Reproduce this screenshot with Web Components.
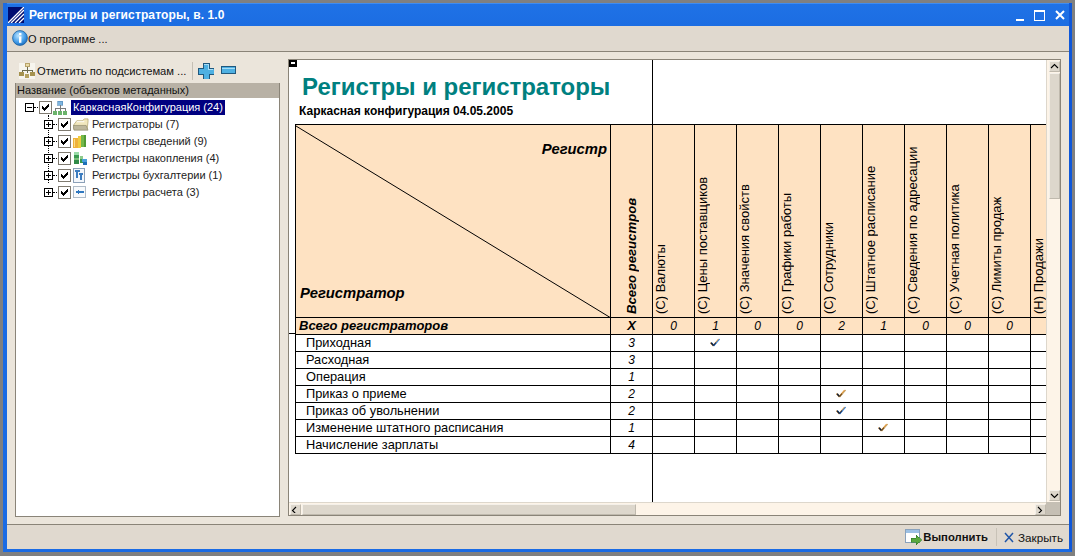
<!DOCTYPE html>
<html><head><meta charset="utf-8">
<style>
html,body{margin:0;padding:0;width:1075px;height:556px;overflow:hidden;background:#808080;font-family:"Liberation Sans",Arial,sans-serif;}
</style></head><body>
<app-window>
  <title-bar slot="title">Регистры и регистраторы, в. 1.0</title-bar>
  <menu-bar slot="menu">О программе ...</menu-bar>
  <tree-panel slot="left"></tree-panel>
  <sheet-view slot="right"></sheet-view>
  <status-bar slot="status"></status-bar>
</app-window>
<script>
function def(name, html, init){
  customElements.define(name, class extends HTMLElement{
    constructor(){super();this.attachShadow({mode:'open'}).innerHTML=typeof html==='function'?html(this):html;}
    connectedCallback(){ if(init) init(this); }
  });
}
const infoIcon=`<svg width="16" height="16" viewBox="0 0 16 16"><defs><radialGradient id="i" cx=".4" cy=".35" r=".75"><stop offset="0" stop-color="#bfe6ff"/><stop offset=".6" stop-color="#3f9ae8"/><stop offset="1" stop-color="#1660b0"/></radialGradient></defs><circle cx="8" cy="8" r="7.4" fill="url(#i)" stroke="#1c5f9e" stroke-width=".8"/><rect x="7" y="3" width="2.4" height="2.2" fill="#fff"/><rect x="7" y="6.4" width="2.4" height="6.4" fill="#fff"/></svg>`;
const hierIcon=`<svg width="16" height="16" viewBox="0 0 16 16" shape-rendering="crispEdges"><rect width="16" height="16" fill="#f7f5ee"/><rect x="6" y="0" width="5" height="4" fill="#b9a36a"/><rect x="7" y="1" width="3" height="2" fill="#e9dca8"/><path d="M8 4v3M3 7h11M3 7v3M8 7v3M13 7v3" stroke="#6c6c50" fill="none"/><rect x="0" y="9" width="5" height="4" fill="#a5924f"/><rect x="6" y="11" width="4" height="4" fill="#b6a260"/><rect x="11" y="9" width="5" height="4" fill="#a5924f"/></svg>`;
const netIcon=`<svg width="14" height="16" viewBox="0 0 14 16" shape-rendering="crispEdges"><rect x="4.5" y="1" width="5" height="4" fill="#7fb6e0" stroke="#4f87b5" stroke-width=".6"/><path d="M7 5v3M2 8h10M2 8v3M7 8v3M12 8v3" stroke="#7a7a7a" fill="none"/><rect x="0" y="11" width="4" height="4" fill="#6bb36b"/><rect x="5" y="11" width="4" height="4" fill="#6bb36b"/><rect x="10" y="11" width="4" height="4" fill="#6bb36b"/></svg>`;
const treeIcons={
 folder:`<svg width="16" height="15" viewBox="0 0 17 16"><path d="M1 8 4 4h6l2-2h4v3L15 13H1z" fill="#f1e7bd" stroke="#b3a672" stroke-width=".8"/><path d="M0 9h14l2 5H1z" fill="#bdb79c" stroke="#8d8868" stroke-width=".7"/><path d="M4 5h8" stroke="#fff" /></svg>`,
 books:`<svg width="13" height="15" viewBox="0 0 14 16" shape-rendering="crispEdges"><rect x="0" y="4" width="5" height="11" fill="#efb23a"/><rect x="1" y="5" width="1" height="9" fill="#f9dd8a"/><rect x="5" y="2" width="4" height="13" fill="#f0cc40"/><rect x="9" y="1" width="5" height="13" fill="#74b84a"/><rect x="12" y="1" width="2" height="13" fill="#4f9a35"/></svg>`,
 stock:`<svg width="15" height="15" viewBox="0 0 16 16" shape-rendering="crispEdges"><rect x="1" y="1" width="5" height="3" fill="#9adca8"/><rect x="1" y="4" width="5" height="3" fill="#3a9a50"/><rect x="1" y="7" width="5" height="3" fill="#7cc07c"/><rect x="1" y="10" width="5" height="4" fill="#2f8a48"/><rect x="7" y="5" width="4" height="3" fill="#8ecb8e"/><rect x="7" y="8" width="4" height="5" fill="#3a9a50"/><rect x="10" y="9" width="5" height="3" fill="#4aa0dc"/><rect x="11" y="12" width="4" height="3" fill="#1e6fb8"/></svg>`,
 acc:`<svg width="12" height="15" viewBox="0 0 12 15" shape-rendering="crispEdges"><rect x=".5" y=".5" width="11" height="14" fill="#f4f7fb" stroke="#8ba0b8"/><path d="M2 3h5M4 3v7M6 6h4M8 6v6" stroke="#3b7cc0" stroke-width="1.2" fill="none"/></svg>`,
 calc:`<svg width="13" height="13" viewBox="0 0 13 13" shape-rendering="crispEdges"><rect x=".5" y=".5" width="12" height="11" fill="#f8fafc" stroke="#b0bcc8"/><path d="M3 6h8" stroke="#2f78c0" stroke-width="2"/><path d="M5 4v4M6 5v2" stroke="#2f78c0"/></svg>`
};
const check=`<svg width="9" height="9" viewBox="0 0 9 9" shape-rendering="crispEdges"><path d="M1 3h1v3h-1zM2 4h1v3h-1zM3 5h1v3h-1zM4 4h1v3h-1zM5 3h1v3h-1zM6 2h1v3h-1zM7 1h1v3h-1z" fill="#000"/></svg>`;

def('app-window',`<style>
:host{display:block;width:1075px;height:556px;box-sizing:border-box;padding:3px 3px 4px 3px;background:#808080}
.f{height:549px;box-sizing:border-box;border:solid #1a6be4;border-width:0 3px 3px 4px;background:#ebe5db;display:flex;flex-direction:column;border-right-color:#1058d8}
.t{height:23px;flex:none}
.m{height:26px;flex:none}
.c{flex:1;min-height:0;display:flex;gap:8px;padding:7px 8px 7px 8px;box-sizing:border-box}
.s{height:25px;flex:none}
</style><div class="f"><div class="t"><slot name="title"></slot></div><div class="m"><slot name="menu"></slot></div><div class="c"><slot name="left"></slot><slot name="right"></slot></div><div class="s"><slot name="status"></slot></div></div>`);

def('title-bar',`<style>
:host{display:flex;align-items:center;height:23px;background:linear-gradient(#1f72e6,#1c6de2);border-top:1px solid #3f8cf0;box-sizing:border-box;color:#fff;font:bold 12px "Liberation Sans",sans-serif;padding-left:1px}
.logo{margin-right:5px;display:block;margin-left:0}
.txt{flex:1;letter-spacing:.12px}
.b{display:flex;align-items:center;gap:10px;margin-right:4px}
svg{display:block}
</style>
<svg class="logo" width="16" height="16" viewBox="0 0 16 16" shape-rendering="crispEdges"><rect width="16" height="16" fill="#000c70"/><path d="M0 16 16 0M3 16 16 3M7 16 16 7M11 16 16 11" stroke="#fff" stroke-width="1.3" shape-rendering="auto"/></svg>
<span class="txt"><slot></slot></span>
<span class="b">
<svg width="8" height="11" viewBox="0 0 8 11" shape-rendering="crispEdges"><rect y="9" width="8" height="2" fill="#fff"/></svg>
<svg width="11" height="11" viewBox="0 0 11 11" shape-rendering="crispEdges"><path d="M.5.5h10v10H.5z" fill="none" stroke="#fff"/><rect width="11" height="1.5" fill="#fff"/></svg>
<svg width="10" height="10" viewBox="0 0 10 10"><path d="M1 1l8 8M9 1l-8 8" stroke="#fff" stroke-width="2"/></svg>
</span>`);

def('menu-bar',`<style>
:host{display:flex;align-items:center;height:26px;box-sizing:border-box;background:#e0d9cf;border-bottom:1px solid #8a8478;padding:0 0 1px 5px;font:11px "Liberation Sans",sans-serif;color:#111;gap:0}
svg{display:block}
span{position:relative;top:1px}
</style>${infoIcon}<span><slot></slot></span>`);

def('tool-bar',`<style>
:host{display:flex;align-items:center;height:23px;padding-left:4px;font:11.2px "Liberation Sans",sans-serif;color:#111}
svg{display:block}
.sep{width:1px;height:18px;background:#c5bfb4;margin:0 5px 0 6px}
.t{margin-left:2px;white-space:nowrap}
.gap{margin-left:7px}
</style>${hierIcon}<span class="t"><slot></slot></span><span class="sep"></span>
<svg width="16" height="17" viewBox="0 0 16 17" shape-rendering="crispEdges"><path d="M5 1h6v5h5v6h-5v5H5v-5H0V6h5z" fill="#4eb0e2" stroke="#20587e"/><path d="M6 2h4v5h5" stroke="#a6dcf6" fill="none"/></svg>
<svg class="gap" width="15" height="9" viewBox="0 0 15 9" shape-rendering="crispEdges"><rect x=".5" y=".5" width="14" height="7" fill="#4eb0e2" stroke="#20587e"/><path d="M1 2h13" stroke="#a6dcf6"/></svg>`);

def('tree-node',(h)=>{
 const icon=h.getAttribute('icon'), root=h.hasAttribute('root'), sel=h.hasAttribute('selected');
 return `<style>
:host{display:flex;align-items:center;height:17px;font:11px "Liberation Sans",sans-serif;color:#222;position:relative}
svg{display:block}
.ind{flex:none;width:${root?9:28}px;display:flex;justify-content:flex-end}
.pm{flex:none;width:9px;height:9px;box-sizing:border-box;border:1px solid #000;background:#fff;position:relative}
.pm:before{content:"";position:absolute;left:1px;right:1px;top:3px;height:1px;background:#000}
.pm.p:after{content:"";position:absolute;top:1px;bottom:1px;left:3px;width:1px;background:#000}
.dots{flex:none;width:4px;border-top:1px dotted #000;margin:0 1px 0 0}
.cb{flex:none;width:13px;height:13px;box-sizing:border-box;border:1px solid #7f7a70;background:#fff;display:flex;align-items:center;justify-content:center;margin-right:${root?1:2}px}
.ic{flex:none;width:${root?18:16}px;display:flex;align-items:center}
.l{white-space:nowrap;padding:0 2px;line-height:15px;height:15px;margin-left:${root?0:1}px}
.sel{background:#000080;color:#fff;outline:0}
</style>
<span class="ind"></span><span class="pm ${root?'':'p'}"></span><span class="dots"></span><span class="cb">${check}</span><span class="ic">${root?netIcon:treeIcons[icon]}</span><span class="l ${sel?'sel':''}"><slot></slot></span>`;
});

def('tree-panel',`<style>
:host{display:flex;flex-direction:column;width:265px;flex:none}
.tb{height:24px;flex:none}
.box{flex:1;display:flex;flex-direction:column;border:1px solid #8a8478;border-top:none;background:#fff;box-sizing:border-box;position:relative}
.head{height:15px;margin:0 -1px;background:#b8b1a5;font:11px "Liberation Sans",sans-serif;color:#111;padding:0 1px;line-height:15px;box-sizing:border-box;border-left:1px solid #8a8478;border-right:1px solid #8a8478}
.nodes{padding-top:1px;position:relative}
.vl{position:absolute;left:32px;top:17px;height:68px;border-left:1px dotted #000}
</style>
<div class="tb"><tool-bar>Отметить по подсистемам ...</tool-bar></div>
<div class="box"><div class="head">Название (объектов метаданных)</div>
<div class="nodes"><span class="vl"></span>
<tree-node root selected>КаркаснаяКонфигурация (24)</tree-node>
<tree-node icon="folder">Регистраторы (7)</tree-node>
<tree-node icon="books">Регистры сведений (9)</tree-node>
<tree-node icon="stock">Регистры накопления (4)</tree-node>
<tree-node icon="acc">Регистры бухгалтерии (1)</tree-node>
<tree-node icon="calc">Регистры расчета (3)</tree-node>
</div></div>`);

const arrows={up:'M1 5 4.5 1.5 8 5',down:'M1 2 4.5 5.5 8 2',left:'M5 1 1.5 4.5 5 8',right:'M2 1 5.5 4.5 2 8'};
def('scroll-btn',(h)=>`<style>:host{display:flex;flex:none;width:9px;height:9px;align-items:center;justify-content:center;background:#ddd7cc;border:1px solid;border-color:#f4f0e9 #bfb9ad #bfb9ad #f4f0e9}svg{display:block}</style><svg width="9" height="7" viewBox="0 0 9 7" fill="none" stroke="#000" stroke-width="1.1"><path d="${arrows[h.getAttribute('dir')]}"/></svg>`);

def('sheet-table',(h)=>{
 const cols=['(С) Валюты','(С) Цены поставщиков','(С) Значения свойств','(С) Графики работы','(С) Сотрудники','(С) Штатное расписание','(С) Сведения по адресации','(С) Учетная политика','(С) Лимиты продаж','(Н) Продажи'];
 const tot=['0','1','0','0','2','1','0','0','0',''];
 const rows=[['Приходная','3',{1:'b'}],['Расходная','3',{}],['Операция','1',{}],['Приказ о приеме','2',{4:'o'}],['Приказ об увольнении','2',{4:'b'}],['Изменение штатного расписания','1',{5:'o'}],['Начисление зарплаты','4',{}]];
 const mark=c=>`<svg width="10" height="9" viewBox="0 0 10 9" fill="none" stroke-width="1.1"><path d="M.4 4.6 3 7.6 8.6 1" stroke="#e8922a"/><path d="M1.4 4.6 4 7.6 9.6 1" stroke="${c=='b'?'#3a84d8':'#c9a060'}"/><path d="M1 4.8 3.5 7.6" stroke="#10203a" stroke-width="1.5"/><path d="M3.5 7.6 6 4.7" stroke="${c=='b'?'#16305c':'#6a4a20'}" stroke-width="1.1"/></svg>`;
 return `<style>
:host{display:block;position:relative;font:12.8px "Liberation Sans",sans-serif;color:#000}
table{border-collapse:collapse;table-layout:fixed;width:777px}
td,th{border:1px solid #000;padding:0;font-weight:normal;overflow:hidden}
.hd td,.hd th,.tot td{background:#fee2c2}
.hd{height:193px}
.hd th{vertical-align:bottom;text-align:start}
.v{writing-mode:vertical-rl;transform:rotate(180deg);white-space:nowrap;height:192px;width:41px;line-height:15px;padding-top:3px;box-sizing:border-box;text-align:start;font-size:13px}
.vb{font-weight:bold;font-style:italic;line-height:41px;font-size:13.2px}
.r{height:17px;line-height:16px}
.tot td{text-align:center;font-style:italic;font-size:12px}
.tot td:first-child{text-align:left;font-weight:bold;padding-left:3px;font-size:13px}
.nm{padding-left:10px;white-space:nowrap}
.n{text-align:center;font-style:italic;font-size:12px}
.c{text-align:center;vertical-align:top}.c svg{display:block;margin:3px auto 0;position:relative;left:-1px}
.reg{position:absolute;font:bold italic 14.8px "Liberation Sans",sans-serif}
.dg{position:absolute;left:0;top:0;display:block}
</style>
<table><colgroup><col style="width:315px"><col style="width:42px">${cols.map(()=>'<col style="width:42px">').join('')}</colgroup>
<tr class="hd"><td style="position:relative"><svg class="dg" width="315" height="193"><line x1="0" y1="1" x2="315" y2="193" stroke="#000"/></svg><span class="reg" style="right:3px;top:16px">Регистр</span><span class="reg" style="left:4px;bottom:16px">Регистратор</span></td>
<th><div class="v vb">Всего регистров</div></th>${cols.map(c=>`<th><div class="v">${c}</div></th>`).join('')}</tr>
<tr class="tot r"><td>Всего регистраторов</td><td style="font-weight:bold;font-size:13px">X</td>${tot.map(t=>`<td>${t}</td>`).join('')}</tr>
${rows.map(r=>`<tr class="r"><td class="nm">${r[0]}</td><td class="n">${r[1]}</td>${tot.map((_,i)=>`<td class="c">${r[2][i]?mark(r[2][i]):''}</td>`).join('')}</tr>`).join('')}
</table>`;
});

def('sheet-view',`<style>
:host{display:grid;grid-template-columns:1fr 14px;grid-template-rows:1fr 13px;width:773px;flex:none;height:457px;box-sizing:border-box;border:1px solid #8a8478;background:#fff;overflow:hidden}
.view{position:relative;overflow:hidden;background:#fff;padding:0 0 0 6px;min-width:0;min-height:0}
.top{height:64px;box-sizing:border-box}
.tt{padding:12px 0 0 7px;box-sizing:border-box}
h1{margin:0;font:bold 24px/30px "Liberation Sans",sans-serif;color:#008080;letter-spacing:-.03px;white-space:nowrap}
.sub{font:bold 12px/15px "Liberation Sans",sans-serif;color:#000;margin:2px 0 0 -3px;white-space:nowrap}
.vline{position:absolute;left:363px;top:0;bottom:0;width:1px;background:#000}
.hline{position:absolute;left:0;top:273px;width:7px;height:1px;background:#000}
.mk{position:absolute;left:0;top:0;width:8px;height:7px;background:#000}
.mk:after{content:"";position:absolute;left:2px;top:2px;width:4px;height:2px;background:#fff}
.vs{display:flex;flex-direction:column;background:#fdf4e8;border-left:1px solid #ddd7cc;box-sizing:border-box;align-items:center;padding:1px 0 1px 1px}
.thumb{width:9px;height:124px;background:#ddd7cc;border:1px solid;border-color:#f4f0e9 #bfb9ad #bfb9ad #f4f0e9;margin-top:1px}
.sp{flex:1}
.hs{display:flex;background:#fdf4e8;border-top:1px solid #ddd7cc;align-items:center;padding:0 0 0 1px;box-sizing:border-box}
.hthumb{width:332px;height:9px;background:#ddd7cc;border:1px solid;border-color:#f4f0e9 #bfb9ad #bfb9ad #f4f0e9;margin-left:1px}
.corner{background:#c5bfb4}
</style>
<div class="view"><div class="top"><div class="tt"><h1>Регистры и регистраторы</h1><div class="sub">Каркасная конфигурация 04.05.2005</div></div></div>
<sheet-table></sheet-table><span class="vline"></span><span class="hline"></span><span class="mk"></span></div>
<div class="vs"><scroll-btn dir="up"></scroll-btn><div class="thumb"></div><div class="sp"></div><scroll-btn dir="down"></scroll-btn></div>
<div class="hs"><scroll-btn dir="left"></scroll-btn><div class="hthumb"></div><div class="sp"></div><scroll-btn dir="right"></scroll-btn></div>
<div class="corner"></div>`);

def('status-bar',`<style>
:host{display:flex;align-items:center;justify-content:flex-end;height:25px;box-sizing:border-box;background:#e0d9cf;border-top:1px solid #8a8478;padding-right:6px;font:11.7px "Liberation Sans",sans-serif;color:#111}
svg{display:block}
.b{font-weight:bold;margin-left:1px;font-size:11.3px}
.sep{width:1px;height:18px;background:#c8c2b7;margin:0 7px 0 8px}
.x{margin-right:4px}
</style>
<svg width="17" height="16" viewBox="0 0 17 16" shape-rendering="crispEdges"><rect x=".5" y=".5" width="14" height="13" fill="#fff" stroke="#8aa2bc"/><rect x="1" y="1" width="13" height="3" fill="#9cc0e4"/><path d="M6 9h5V6l6 5-6 5v-3H6z" fill="#5aa83e" stroke="#2f7a2a" stroke-width=".6"/></svg>
<span class="b">Выполнить</span><span class="sep"></span>
<svg class="x" width="10" height="11" viewBox="0 0 10 11"><path d="M1 1l8 9M9 1l-8 9" stroke="#1f55a8" stroke-width="1.5" fill="none"/></svg><span>Закрыть</span>`);
</script>
</body></html>
